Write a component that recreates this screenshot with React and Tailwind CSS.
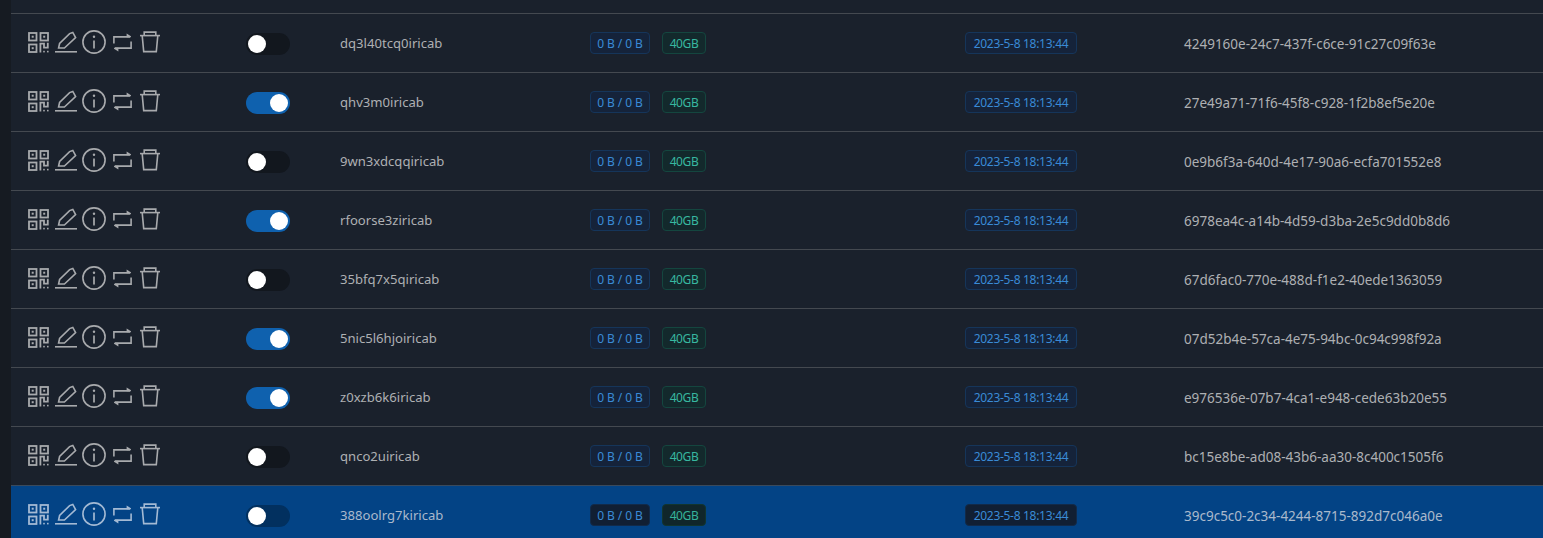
const rows = [
  { name: "dq3l40tcq0iricab", on: false, id: "4249160e-24c7-437f-c6ce-91c27c09f63e" },
  { name: "qhv3m0iricab", on: true, id: "27e49a71-71f6-45f8-c928-1f2b8ef5e20e" },
  { name: "9wn3xdcqqiricab", on: false, id: "0e9b6f3a-640d-4e17-90a6-ecfa701552e8" },
  { name: "rfoorse3ziricab", on: true, id: "6978ea4c-a14b-4d59-d3ba-2e5c9dd0b8d6" },
  { name: "35bfq7x5qiricab", on: false, id: "67d6fac0-770e-488d-f1e2-40ede1363059" },
  { name: "5nic5l6hjoiricab", on: true, id: "07d52b4e-57ca-4e75-94bc-0c94c998f92a" },
  { name: "z0xzb6k6iricab", on: true, id: "e976536e-07b7-4ca1-e948-cede63b20e55" },
  { name: "qnco2uiricab", on: false, id: "bc15e8be-ad08-43b6-aa30-8c400c1505f6" },
  { name: "388oolrg7kiricab", on: false, id: "39c9c5c0-2c34-4244-8715-892d7c046a0e", active: true },
];

function QrIcon() {
  return (
    <svg width="21" height="21" viewBox="0 0 21 21" fill="none" stroke="currentColor" strokeWidth="1.8" className="shrink-0">
      <rect x="1" y="1" width="7.5" height="7.5" />
      <rect x="12.5" y="1" width="7.5" height="7.5" />
      <rect x="1" y="12.5" width="7.5" height="7.5" />
      <rect x="3.7" y="3.7" width="2" height="2" fill="currentColor" stroke="none" />
      <rect x="15.2" y="3.7" width="2" height="2" fill="currentColor" stroke="none" />
      <rect x="3.7" y="15.2" width="2" height="2" fill="currentColor" stroke="none" />
      <path d="M12.4 20.5V11.6H16V15.6H19.8V10.8" />
      <rect x="15.2" y="18.8" width="1.6" height="1.6" fill="currentColor" stroke="none" />
      <rect x="19" y="18.8" width="1.6" height="1.6" fill="currentColor" stroke="none" />
    </svg>
  );
}

function EditIcon() {
  return (
    <svg width="22" height="22" viewBox="0 0 22 22" fill="none" stroke="currentColor" strokeWidth="1.6" className="shrink-0">
      <path d="M0 20.8H22" />
      <path d="M3.6 17L4.6 12.5L14.6 2.6L17.8 1.4L20.6 6.6L9.4 17Z" />
    </svg>
  );
}

function InfoIcon() {
  return (
    <svg width="24" height="24" viewBox="0 0 24 24" fill="none" stroke="currentColor" className="shrink-0">
      <circle cx="12" cy="12" r="11.1" strokeWidth="1.6" />
      <circle cx="12" cy="6.8" r="1.2" fill="currentColor" stroke="none" />
      <path d="M12 10.6V18.4" strokeWidth="1.7" />
    </svg>
  );
}

function RetweetIcon() {
  return (
    <svg width="19" height="19" viewBox="0 0 19 19" fill="none" stroke="currentColor" strokeWidth="1.6" className="shrink-0">
      <path d="M0.9 10.6V3.9H17" />
      <path d="M13.6 0.6L18 3.2V4.2H13.6Z" fill="currentColor" stroke="none" />
      <path d="M18.1 8.4V15.1H2" />
      <path d="M5.4 18.4L1 15.8V14.8H5.4Z" fill="currentColor" stroke="none" />
    </svg>
  );
}

function TrashIcon() {
  return (
    <svg width="20" height="22" viewBox="0 0 20 22" fill="none" stroke="currentColor" strokeWidth="1.6" className="shrink-0">
      <path d="M0 4.6H20" />
      <path d="M4.2 4.6V1.1H15.8V4.6" />
      <path d="M2.2 4.6L3.7 20.6H16.3L17.8 4.6" />
    </svg>
  );
}

function Badge({ children, green, active, className }) {
  const colors = green
    ? active
      ? "bg-[#10262b] border-[#11352f] text-[#36b39a]"
      : "bg-[#13292c] border-[#14463f] text-[#38b8a0]"
    : active
      ? "bg-[#111f33] border-[#122a49] text-[#3a8bd6]"
      : "bg-[#15233a] border-[#15355a] text-[#3a8bd6]";
  return (
    <span className={`h-[22px] pt-[2px] flex items-center justify-center rounded-[4px] border text-xs whitespace-nowrap ${colors} ${className}`}>
      {children}
    </span>
  );
}

function Row({ row }) {
  return (
    <div
      className={`h-[59px] flex items-center border-t ${
        row.active ? "bg-[#034385] border-[#3a4a5c] text-[#aab9cc]" : "bg-[#1a212c] border-[#444950] text-[#aeb0b3]"
      }`}
    >
      <div className={`w-[235px] pl-[17px] pb-[2px] flex items-center shrink-0 ${row.active ? "text-[#a4bad4]" : "text-[#a8aaad]"}`}>
        <QrIcon />
        <div className="ml-[6px] flex items-center">
          <EditIcon />
        </div>
        <div className="ml-[5px] flex items-center">
          <InfoIcon />
        </div>
        <div className="ml-[7px] flex items-center">
          <RetweetIcon />
        </div>
        <div className="ml-[8px] flex items-center">
          <TrashIcon />
        </div>
      </div>
      <div className="w-[94px] pt-[2px] shrink-0">
        <span
          className={`w-[44px] h-[22px] rounded-full flex items-center px-[2px] ${
            row.on ? "bg-[#0f61ae] justify-end" : row.active ? "bg-[#02305f] justify-start" : "bg-[#12171e] justify-start"
          }`}
        >
          <span className="w-[18px] h-[18px] rounded-full bg-white" />
        </span>
      </div>
      <div className="w-[250px] pt-[2px] shrink-0 text-[13.1px]">{row.name}</div>
      <div className="w-[375px] shrink-0 flex items-center gap-3">
        <Badge active={row.active} className="w-[60px] tracking-[-0.1px]">0 B / 0 B</Badge>
        <Badge green active={row.active} className="w-[44px] tracking-[-0.4px]">40GB</Badge>
      </div>
      <div className="w-[219px] shrink-0 flex">
        <Badge active={row.active} className="w-[112px] tracking-[-0.3px]">2023-5-8 18:13:44</Badge>
      </div>
      <div className="pt-[2px] text-[13.5px]">{row.id}</div>
    </div>
  );
}

export default function App() {
  return (
    <div className="h-[538px] overflow-hidden bg-[#161b22] font-['Noto_Sans',sans-serif]">
      <div className="ml-[11px] pt-[13px] bg-[#1a212c]">
        {rows.map((row) => (
          <Row key={row.name} row={row} />
        ))}
      </div>
    </div>
  );
}
